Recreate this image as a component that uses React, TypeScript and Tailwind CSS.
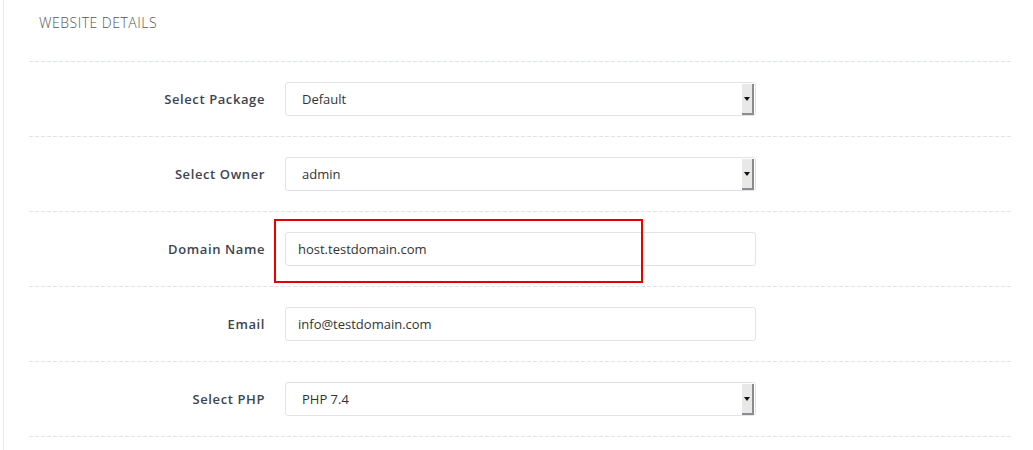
import React from 'react'

const font = { fontFamily: '"Open Sans", "Liberation Sans", sans-serif' }

const Dashed = () => (
  <div className="h-px ml-[25px] mr-[22px] bg-[repeating-linear-gradient(90deg,#dde3ea_0_4px,transparent_4px_6px)]" />
)

const SelectBox = ({ value }: { value: string }) => (
  <div className="relative w-[471px] h-[34px] border border-[#dfe4eb] rounded-[3px] bg-white flex items-center">
    <span className="pl-[16px] pt-px text-[13px] text-[#333]">{value}</span>
    <div className="absolute right-[1px] top-[1px] bottom-[0px] w-[12px] bg-[#e8e8e8] border-r-2 border-b-2 border-[#8c8c8c] flex items-center justify-center">
      <svg width="6" height="4" viewBox="0 0 6 4">
        <path d="M0 0h6L3 4z" fill="#111" />
      </svg>
    </div>
  </div>
)

const TextBox = ({ value }: { value: string }) => (
  <div className="w-[471px] h-[34px] border border-[#dfe4eb] rounded-[3px] bg-white flex items-center">
    <span className="pl-[12px] pt-px text-[13px] text-[#333]">{value}</span>
  </div>
)

const Row = ({ label, children, mark }: { label: string; children: React.ReactNode; mark?: boolean }) => (
  <>
    <div className="relative h-[74px] flex items-center">
      <div className="w-[261px] pt-px text-right text-[13px] font-semibold text-[#3d4451] tracking-[0.6px]">{label}</div>
      <div className="ml-[20px]">{children}</div>
      {mark && (
        <div className="absolute left-[270px] top-[7px] w-[369px] h-[64px] border-2 border-[#e60000]" />
      )}
    </div>
    <Dashed />
  </>
)

export default function App() {
  return (
    <div className="w-[1033px] h-[450px] bg-white overflow-hidden" style={font}>
      <div className="ml-[3px] h-full border-l border-[#e3e7ec]">
        <div className="h-[61px] pl-[35px] pt-[12px]">
          <h2 className="text-[14px] font-light text-[#555] uppercase tracking-[0.5px]">Website Details</h2>
        </div>
        <Dashed />
        <Row label="Select Package">
          <SelectBox value="Default" />
        </Row>
        <Row label="Select Owner">
          <SelectBox value="admin" />
        </Row>
        <Row label="Domain Name" mark>
          <TextBox value="host.testdomain.com" />
        </Row>
        <Row label="Email">
          <TextBox value="info@testdomain.com" />
        </Row>
        <Row label="Select PHP">
          <SelectBox value="PHP 7.4" />
        </Row>
      </div>
    </div>
  )
}
